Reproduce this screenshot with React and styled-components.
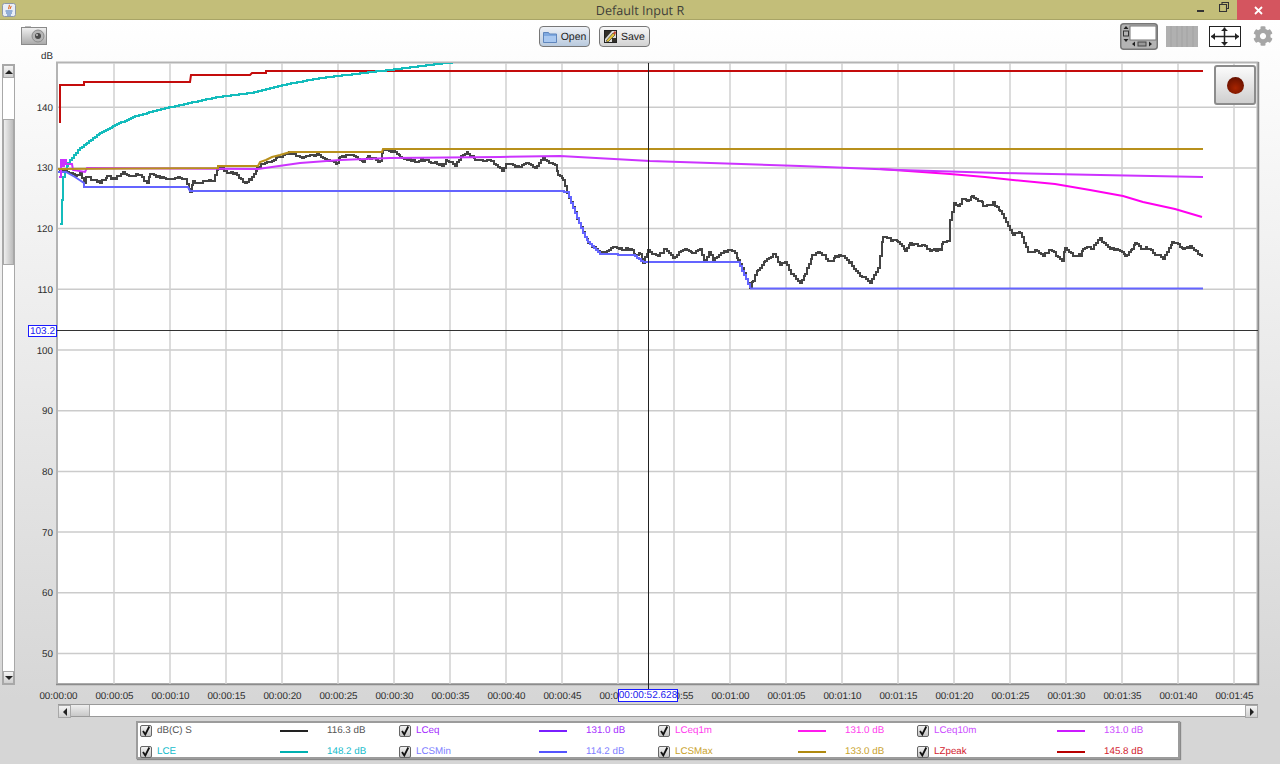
import styled, { createGlobalStyle } from 'styled-components';
import { FaCog } from 'react-icons/fa';

const GlobalStyle = createGlobalStyle`
  html, body {
    margin: 0;
    padding: 0;
    overflow: hidden;
    font-family: 'Liberation Sans', Arial, sans-serif;
    text-rendering: geometricPrecision;
  }
`;

// traces traced off the plot, in page pixels
const BLACK = [
  [58, 170], [65, 171], [75, 175], [80, 174], [84, 182], [87, 177], [93, 181], [100, 182], [107, 177], [115, 178],
  [123, 172], [132, 177], [138, 174], [147, 183], [150, 175], [160, 177], [167, 180], [178, 177], [185, 180], [190, 191],
  [193, 182], [205, 182], [213, 180], [218, 167], [227, 172], [237, 175], [243, 183], [250, 180], [257, 169], [263, 163],
  [270, 162], [277, 158], [290, 153], [300, 158], [310, 155], [317, 155], [328, 160], [337, 163], [340, 157], [352, 155],
  [363, 162], [368, 157], [380, 162], [383, 150], [395, 151], [400, 157], [407, 160], [415, 161], [423, 160], [442, 165],
  [447, 160], [455, 165], [463, 155], [468, 153], [475, 160], [492, 161], [502, 170], [507, 163], [520, 167], [527, 163],
  [535, 168], [543, 159], [555, 165], [558, 175], [563, 180], [567, 192], [575, 213], [583, 233], [588, 242], [598, 252],
  [605, 252], [613, 246], [622, 249], [632, 249], [635, 255], [640, 253], [643, 262], [648, 251], [658, 256], [665, 248],
  [673, 258], [683, 249], [692, 253], [700, 250], [705, 261], [709, 251], [713, 260], [722, 252], [733, 250], [738, 260],
  [750, 287], [753, 280], [758, 270], [765, 260], [774, 254], [780, 265], [785, 262], [792, 275], [800, 283], [805, 275],
  [812, 255], [820, 252], [830, 262], [835, 257], [843, 255], [850, 263], [858, 273], [870, 283], [878, 268], [883, 237],
  [893, 240], [898, 242], [905, 251], [910, 244], [923, 245], [930, 250], [940, 250], [943, 242], [948, 242], [950, 220],
  [954, 203], [958, 207], [962, 200], [967, 201], [972, 196], [982, 202], [983, 207], [993, 203], [1000, 210], [1008, 227],
  [1013, 235], [1020, 232], [1028, 253], [1035, 250], [1043, 255], [1050, 250], [1062, 260], [1065, 249], [1073, 255],
  [1080, 255], [1083, 248], [1092, 248], [1100, 239], [1110, 248], [1122, 252], [1125, 255], [1132, 250], [1135, 243],
  [1142, 250], [1147, 248], [1163, 259], [1172, 242], [1183, 248], [1190, 247], [1202, 257],
];
const TEAL = [
  [60, 224], [62, 200], [63, 177], [68, 163], [78, 150], [87, 143], [100, 133], [113, 126], [133, 117], [157, 110],
  [180, 105], [217, 97], [250, 93], [283, 85], [320, 78], [380, 71], [420, 66], [455, 62],
];
const BLUE_DROP = [[558, 191], [567, 192], [575, 213], [583, 233], [588, 242], [600, 254], [633, 255], [643, 262]];
const BLUE_DROP2 = [[738, 262], [750, 288]];
const BLUE = '58,172 66,172 75,177 84,183 84,187 188,187 190,191 558,191';
const RED = '59,122 60,122 60,85 84,85 84,82 190,82 191,75 250,75 252,73 266,73 266,71 1203,71';
const GOLD = '58,169 218,168 218,166 258,166 260,162 266,160 272,157 280,155 290,152 382,152 383,149 395,149 396,149 1203,149';
const VIOLET = '59,177 61,177 61,160 66,160 66,164 72,164 73,170 85,172 87,168 258,169 300,163 340,160 390,158 500,157 560,156 650,161 800,166 900,170 1000,173 1100,175 1203,177';
const MAGENTA = '880,169 950,174 985,177 1013,180 1055,184 1090,190 1123,196 1143,202 1175,209 1202,217';

// y position of a dB value on the axis
const dbY = (db) => 350 - 6.07 * (db - 100);

const Y_TICKS = [140, 130, 120, 110, 100, 90, 80, 70, 60, 50];
const X_TICKS = Array.from({ length: 22 }, (_, i) => {
  const sec = i * 5;
  const mm = String(Math.floor(sec / 60)).padStart(2, '0');
  const ss = String(sec % 60).padStart(2, '0');
  return { x: 58 + i * 56, label: `00:${mm}:${ss}` };
});

function stepPath(points, step, jitter) {
  let seed = 17;
  const rand = () => {
    seed = (seed * 16807) % 2147483647;
    return seed / 2147483647;
  };
  const out = [];
  for (let i = 0; i < points.length - 1; i++) {
    const [x0, y0] = points[i];
    const [x1, y1] = points[i + 1];
    for (let x = x0; x < x1; x += step) {
      const t = (x - x0) / (x1 - x0);
      const noise = jitter ? (rand() - 0.5) * jitter : 0;
      out.push([x, Math.round(y0 + (y1 - y0) * t + noise)]);
    }
  }
  out.push(points[points.length - 1]);
  let d = `M${out[0][0]} ${out[0][1]}`;
  for (let i = 1; i < out.length; i++) {
    d += `H${out[i][0]}V${out[i][1]}`;
  }
  return d;
}

const LEGEND = [
  { name: 'dB(C) S', value: '116.3 dB', text: '#555555', line: '#222222' },
  { name: 'LCeq', value: '131.0 dB', text: '#a52cff', line: '#7a1fff' },
  { name: 'LCeq1m', value: '131.0 dB', text: '#ff3cee', line: '#ff1aee' },
  { name: 'LCeq10m', value: '131.0 dB', text: '#cc4dff', line: '#cc1aff' },
  { name: 'LCE', value: '148.2 dB', text: '#14bccb', line: '#00b0b0' },
  { name: 'LCSMin', value: '114.2 dB', text: '#7d7dff', line: '#5555ff' },
  { name: 'LCSMax', value: '133.0 dB', text: '#c9a22c', line: '#b08a10' },
  { name: 'LZpeak', value: '145.8 dB', text: '#d2232f', line: '#b80000' },
];

function JavaIcon() {
  return (
    <svg width="14" height="14" viewBox="0 0 14 14">
      <rect x="0.5" y="0.5" width="13" height="13" rx="2" fill="#e9eef6" stroke="#8d97a8" />
      <path d="M7 2c1.5 1.5-1.5 2.5 0 4M9 3c.6 1-1.4 1.6-.6 3" stroke="#e0651c" strokeWidth="1.1" fill="none" />
      <path d="M3.5 8h7M4 10h6M5 12h4" stroke="#3d6fb5" strokeWidth="1" />
    </svg>
  );
}

function CameraIcon() {
  return (
    <svg width="26" height="19" viewBox="0 0 26 19">
      <defs>
        <linearGradient id="cam" x1="0" y1="0" x2="0" y2="1">
          <stop offset="0" stopColor="#f0f0f0" />
          <stop offset="1" stopColor="#a9a9a9" />
        </linearGradient>
      </defs>
      <rect x="4" y="0" width="6" height="2" fill="#bdbdbd" />
      <rect x="0.5" y="1.5" width="25" height="17" fill="url(#cam)" stroke="#8a8a8a" />
      <circle cx="17" cy="10" r="6" fill="#b5b5b5" stroke="#8c8c8c" />
      <circle cx="17" cy="10" r="3" fill="#4a4a4a" />
      <circle cx="16" cy="9" r="1" fill="#c8c8c8" />
    </svg>
  );
}

function FolderIcon() {
  return (
    <svg width="14" height="12" viewBox="0 0 14 12">
      <path d="M.5 1.500h5l1 1.500h7v8.500h-13z" fill="#7fa9e0" stroke="#5f86bd" />
      <rect x="1" y="5" width="12" height="6" fill="#a9c8f0" />
    </svg>
  );
}

function SaveIcon() {
  return (
    <svg width="13" height="13" viewBox="0 0 13 13">
      <rect x="0.5" y="0.5" width="12" height="12" fill="#dcdcdc" stroke="#222" />
      <path d="M1 1h7L1 9z" fill="#33302a" />
      <path d="M2 11 L9 3 L11 5 L4 12z" fill="#e2c33a" stroke="#33302a" strokeWidth="0.6" />
      <path d="M9 3l2-2 1 1.500-1 2.500z" fill="#c9452b" />
      <rect x="8" y="8" width="4" height="4" fill="#33302a" />
    </svg>
  );
}

function LayoutIcon() {
  return (
    <svg width="38" height="27" viewBox="0 0 38 27">
      <rect x="0.750" y="0.750" width="36.500" height="25.500" rx="3" fill="#b4b4b4" stroke="#777" strokeWidth="1.500" />
      <rect x="10" y="3" width="26" height="14" fill="#fff" stroke="#777" />
      <path d="M6 3l2.500 3h-5zM6 19l2.500-3h-5z" fill="#222" />
      <rect x="3.500" y="8" width="5" height="5" fill="none" stroke="#333" />
      <path d="M12 21l3-2.500v5zM32 21l-3-2.500v5z" fill="#222" />
      <rect x="18" y="19" width="8" height="4" fill="#999" stroke="#444" />
    </svg>
  );
}

function StripesIcon() {
  return (
    <svg width="32" height="21" viewBox="0 0 32 21">
      <rect width="32" height="21" fill="#b0b0b0" />
      <path d="M5 0v21M11 0v21M16 0v21M21 0v21M27 0v21" stroke="#a2a2a2" />
    </svg>
  );
}

function ResizeIcon() {
  return (
    <svg width="32" height="21" viewBox="0 0 32 21">
      <rect x="0.500" y="0.500" width="31" height="20" fill="#fff" stroke="#222" />
      <path d="M2 10.500h28M15.500 1.500v18" stroke="#222" strokeWidth="1.500" />
      <path d="M2 10.500l4-3.500v7zM30 10.500l-4-3.500v7zM15.500 1.500l-3.500 3.500h7zM15.500 19.500l-3.500-3.500h7z" fill="#222" />
    </svg>
  );
}

function CheckMark() {
  return (
    <svg width="12" height="12" viewBox="0 0 12 12">
      <path d="M3 6 L5.300 9.500 L9.300 1.500" fill="none" stroke="#111" strokeWidth="1.800" />
    </svg>
  );
}

function Chart() {
  return (
    <ChartSvg viewBox="16 51 1264 652">
      <defs>
        <clipPath id="plot">
          <rect x="58" y="63" width="1199" height="621" />
        </clipPath>
      </defs>
      <rect x="57" y="62.500" width="1200.500" height="621.500" fill="#fff" stroke="#b4b4b4" strokeWidth="2" />
      <path d="M56 684.500H1258.500V62" fill="none" stroke="#8c8c8c" strokeWidth="1.500" />
      {Y_TICKS.map((db) => (
        <line key={db} x1="58" x2="1257" y1={dbY(db)} y2={dbY(db)} stroke="#cbcbcb" strokeWidth="1.500" />
      ))}
      {X_TICKS.slice(1).map((t) => (
        <line key={t.x} x1={t.x} x2={t.x} y1="63" y2="684" stroke="#d0d0d0" strokeWidth="1.500" />
      ))}
      <g clipPath="url(#plot)" fill="none" strokeWidth="2">
        <polyline points={RED} stroke="#c40c0c" />
        <path d={stepPath(TEAL, 2, 0)} stroke="#14bcbc" />
        <path d={stepPath(BLACK, 2, 2.400)} stroke="#444444" />
        <polyline points={BLUE} stroke="#6464ff" />
        <path d={stepPath(BLUE_DROP, 2, 0)} stroke="#6464ff" />
        <polyline points="643,262 738,262" stroke="#6464ff" />
        <path d={stepPath(BLUE_DROP2, 2, 0)} stroke="#6464ff" />
        <polyline points="750,288.500 1203,288.500" stroke="#6464ff" />
        <polyline points={MAGENTA} stroke="#ff00f0" />
        <polyline points={VIOLET} stroke="#cc33ff" />
        <rect x="60" y="160" width="5" height="7" fill="#cc33ff" stroke="none" />
        <polyline points={GOLD} stroke="#b8901c" />
        <line x1="648.500" x2="648.500" y1="63" y2="689" stroke="#222" strokeWidth="1" />
      </g>
      <line x1="648.500" x2="648.500" y1="684" y2="689" stroke="#222" strokeWidth="1" />
      <line x1="56" x2="1258" y1="330.500" y2="330.500" stroke="#333" strokeWidth="1.200" />
      <AxisText x="53" y="59" textAnchor="end">dB</AxisText>
      {Y_TICKS.map((db) => (
        <AxisText key={db} x="53" y={dbY(db) + 3.500} textAnchor="end">
          {db}
        </AxisText>
      ))}
      {X_TICKS.map((t) => (
        <AxisText key={t.x} x={t.x + 0.500} y="698.500" textAnchor="middle">
          {t.label}
        </AxisText>
      ))}
    </ChartSvg>
  );
}

export default function App() {
  return (
    <Page>
      <GlobalStyle />
      <TitleBar>
        <JavaSlot>
          <JavaIcon />
        </JavaSlot>
        <Title>Default Input R</Title>
        <WindowControls>
          <Minimize />
          <Restore>
            <svg width="10" height="10" viewBox="0 0 10 10">
              <path d="M3 2.500V.500h6.500v6H7.500M.500 2.500h7v7h-7z" fill="none" stroke="#333" strokeWidth="1.100" />
            </svg>
          </Restore>
          <CloseBox>
            <svg width="9" height="9" viewBox="0 0 9 9">
              <path d="M1 1l7 7M8 1L1 8" stroke="#fff" strokeWidth="1.800" />
            </svg>
          </CloseBox>
        </WindowControls>
      </TitleBar>

      <Toolbar>
        <CameraSlot>
          <CameraIcon />
        </CameraSlot>
        <FileButtons>
          <ToolButton $tint>
            <FolderIcon />
            Open
          </ToolButton>
          <ToolButton>
            <SaveIcon />
            Save
          </ToolButton>
        </FileButtons>
        <ViewIcons>
          <LayoutSlot>
            <LayoutIcon />
          </LayoutSlot>
          <StripesIcon />
          <ResizeSlot>
            <ResizeIcon />
          </ResizeSlot>
          <GearSlot>
            <FaCog size={20} />
          </GearSlot>
        </ViewIcons>
      </Toolbar>

      <ChartRow>
        <VScroll>
          <ScrollButton>
            <Arrow $dir="up" />
          </ScrollButton>
          <VTrackTop />
          <VThumb />
          <VTrackBottom />
          <ScrollButton>
            <Arrow $dir="down" />
          </ScrollButton>
        </VScroll>
        <ChartArea>
          <Chart />
          <RecordButton>
            <RecordLamp />
          </RecordButton>
          <LevelBadge>103.2</LevelBadge>
          <TimeBadge>00:00:52.628</TimeBadge>
        </ChartArea>
      </ChartRow>

      <HScroll>
        <ScrollButton>
          <Arrow $dir="left" />
        </ScrollButton>
        <HThumb />
        <HTrack />
        <ScrollButton>
          <Arrow $dir="right" />
        </ScrollButton>
      </HScroll>

      <Legend>
        {LEGEND.map((item) => (
          <LegendCell key={item.name} $color={item.text}>
            <CheckBox>
              <CheckMark />
            </CheckBox>
            <span>{item.name}</span>
            <LegendLine $color={item.line} />
            <span>{item.value}</span>
          </LegendCell>
        ))}
      </Legend>
    </Page>
  );
}

const Page = styled.div`
  width: 1280px;
  height: 764px;
  display: flex;
  flex-direction: column;
  overflow: hidden;
  background: linear-gradient(#ffffff 20px, #f4f4f4 200px, #d6d6d6 700px);
`;

const TitleBar = styled.div`
  height: 20px;
  box-sizing: border-box;
  flex: none;
  display: flex;
  align-items: center;
  justify-content: space-between;
  background: #c3be79;
  border-bottom: 1px solid #a8a466;
`;

const JavaSlot = styled.div`
  display: flex;
  margin-left: 2px;
  width: 81px;
`;

const Title = styled.div`
  font-family: 'Open Sans', sans-serif;
  font-size: 12.6px;
  color: #3f3f3a;
  margin-top: 1px;
`;

const WindowControls = styled.div`
  display: flex;
  align-items: center;
  height: 20px;
  align-self: flex-start;
`;

const Minimize = styled.div`
  width: 7px;
  height: 2px;
  background: #333;
  margin-top: 1px;
`;

const Restore = styled.div`
  display: flex;
  margin: 0 8px 6px 15px;
`;

const CloseBox = styled.div`
  width: 43px;
  height: 20px;
  display: flex;
  align-items: center;
  justify-content: center;
  background: #d4555f;
`;

const Toolbar = styled.div`
  height: 31px;
  flex: none;
  display: flex;
  align-items: flex-start;
`;

const CameraSlot = styled.div`
  display: flex;
  margin: 6px 0 0 21px;
`;

const FileButtons = styled.div`
  display: flex;
  gap: 9px;
  margin: 6px 0 0 492px;
`;

const ToolButton = styled.div`
  width: 51px;
  height: 21px;
  box-sizing: border-box;
  display: flex;
  align-items: center;
  justify-content: center;
  gap: 4px;
  font-size: 10.5px;
  color: #222;
  border: 1px solid #777;
  border-radius: 4px;
  background: ${(p) =>
    p.$tint ? 'linear-gradient(#eef1f6, #b9cade)' : 'linear-gradient(#f8f8f8, #d2d2d2)'};
`;

const ViewIcons = styled.div`
  display: flex;
  align-items: flex-start;
  margin: 3px 0 0 470px;
  padding-top: 3px;
`;

const LayoutSlot = styled.div`
  display: flex;
  margin: -3px 8px 0 0;
`;

const ResizeSlot = styled.div`
  display: flex;
  margin-left: 11px;
`;

const GearSlot = styled.div`
  display: flex;
  margin-left: 12px;
  color: #a6a6a6;
`;

const ChartRow = styled.div`
  height: 652px;
  flex: none;
  display: flex;
`;

const VScroll = styled.div`
  width: 13px;
  height: 621px;
  flex: none;
  box-sizing: border-box;
  margin: 13px 0 0 2px;
  display: flex;
  flex-direction: column;
  border: 1px solid #a8a8a8;
  background: #fff;
`;

const ScrollButton = styled.div`
  width: 13px;
  height: 13px;
  flex: none;
  box-sizing: border-box;
  display: flex;
  align-items: center;
  justify-content: center;
  border: 1px solid #a8a8a8;
  background: linear-gradient(#f4f4f4, #cfcfcf);
  ${VScroll} & {
    width: 11px;
  }
`;

const Arrow = styled.div`
  width: 0;
  height: 0;
  border-style: solid;
  border-color: transparent;
  ${(p) => p.$dir === 'up' && 'border-width: 0 4px 4px; border-bottom-color: #222;'}
  ${(p) => p.$dir === 'down' && 'border-width: 4px 4px 0; border-top-color: #222;'}
  ${(p) => p.$dir === 'left' && 'border-width: 4px 4px 4px 0; border-right-color: #222;'}
  ${(p) => p.$dir === 'right' && 'border-width: 4px 0 4px 4px; border-left-color: #222;'}
`;

const VTrackTop = styled.div`
  height: 41px;
  flex: none;
`;

const VThumb = styled.div`
  height: 146px;
  flex: none;
  box-sizing: border-box;
  border: 1px solid #a8a8a8;
  background: linear-gradient(90deg, #eeeeee, #bcbcbc);
`;

const VTrackBottom = styled.div`
  flex: 1;
`;

const ChartArea = styled.div`
  position: relative;
  width: 1264px;
  height: 652px;
  flex: none;
  margin-left: 1px;
`;

const ChartSvg = styled.svg`
  display: block;
  width: 1264px;
  height: 652px;
  overflow: visible;
`;

const AxisText = styled.text`
  font-family: 'Liberation Sans', Arial, sans-serif;
  font-size: 9.8px;
  fill: #2c2c2c;
`;

const RecordButton = styled.div`
  position: absolute;
  left: 1198px;
  top: 14px;
  width: 42px;
  height: 40px;
  box-sizing: border-box;
  display: flex;
  align-items: center;
  justify-content: center;
  border: 2px solid #8c8c8c;
  border-radius: 3px;
  background: linear-gradient(#fbfbfb, #cfcfcf);
`;

const RecordLamp = styled.div`
  width: 17px;
  height: 17px;
  border-radius: 50%;
  background: radial-gradient(circle at 50% 65%, #a82400, #6a1200 75%, #3c0a00);
`;

const LevelBadge = styled.div`
  position: absolute;
  left: 12px;
  top: 274px;
  width: 29px;
  height: 12px;
  box-sizing: border-box;
  display: flex;
  align-items: center;
  justify-content: center;
  font-size: 10px;
  color: #1a1aee;
  background: #fff;
  border: 1px solid #1a1aff;
`;

const TimeBadge = styled(LevelBadge)`
  left: 602px;
  top: 638px;
  width: 60px;
  height: 13px;
`;

const HScroll = styled.div`
  width: 1200px;
  height: 13px;
  flex: none;
  box-sizing: border-box;
  display: flex;
  margin: 1px 0 0 58px;
  background: #fff;
  border-top: 1px solid #9a9a9a;
  border-bottom: 1px solid #9a9a9a;
`;

const HThumb = styled.div`
  width: 19px;
  flex: none;
  box-sizing: border-box;
  background: linear-gradient(#efefef, #c8c8c8);
  border-right: 1px solid #aaa;
`;

const HTrack = styled.div`
  flex: 1;
`;

const Legend = styled.div`
  width: 1044px;
  height: 38px;
  flex: none;
  box-sizing: border-box;
  margin: 4px 0 0 136px;
  padding: 2px 0 0 2px;
  display: grid;
  grid-template-columns: repeat(4, 259px);
  grid-template-rows: repeat(2, 12px);
  row-gap: 9px;
  align-content: center;
  background: #fff;
  border: 2px solid #9c9c9c;
  box-shadow: 1px 1px 1px #8a8a8a;
`;

const LegendCell = styled.div`
  display: grid;
  grid-template-columns: 17px 123px 47px auto;
  align-items: center;
  font-size: 9.8px;
  color: ${(p) => p.$color};
`;

const CheckBox = styled.div`
  width: 12px;
  height: 12px;
  box-sizing: border-box;
  display: flex;
  align-items: center;
  justify-content: center;
  border: 1px solid #666;
  border-radius: 2px;
  background: linear-gradient(#f2f2f2, #c4c4c4);
  svg {
    flex: none;
  }
`;

const LegendLine = styled.div`
  width: 28px;
  height: 2px;
  background: ${(p) => p.$color};
`;
